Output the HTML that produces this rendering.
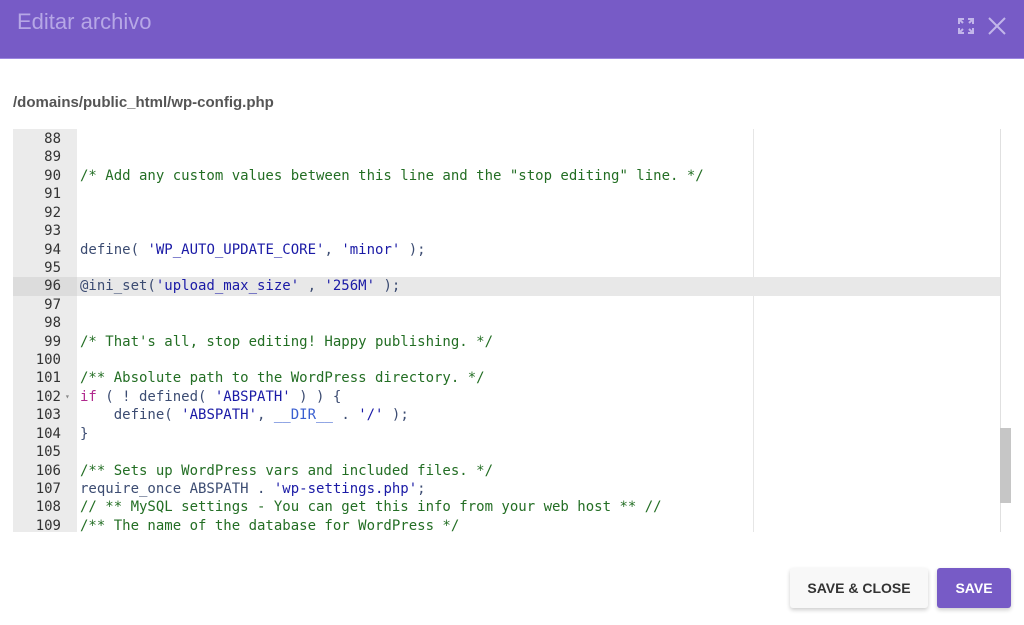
<!DOCTYPE html>
<html><head><meta charset="utf-8"><style>
body{margin:0;width:1024px;height:625px;background:#fff;font-family:"Liberation Sans",sans-serif;overflow:hidden;position:relative}
.hdr{position:absolute;left:0;top:0;width:1024px;height:58px;background:#775bc6;border-bottom:1px solid #9c86e0}
.title{position:absolute;left:17px;top:9px;font-size:22px;color:#b6a7e6}
.path{position:absolute;left:13px;top:94px;font-size:15px;font-weight:bold;color:#555}
.ed{position:absolute;left:13px;top:129px;width:998px;height:403px;background:#fff;overflow:hidden}
.gut{position:absolute;left:0;top:0;width:64px;height:403px;background:#ebebeb}
.lines{position:absolute;left:0;top:1px;width:987px;font-family:"DejaVu Sans Mono",monospace;font-size:14px;line-height:18.43px}
.ln{display:block;position:relative;height:18.43px}
.n{position:absolute;left:0;width:48px;text-align:right;color:#333}
.c{position:absolute;left:67px;color:#3c4c72;white-space:pre}
.hl{background:#e8e8e8;width:987px}
.hl .n{background:#dcdcdc;width:64px;padding-right:16px;box-sizing:border-box}
.cm{color:#236e24}.s{color:#1a1aa6}.k{color:#b0288d}.d{color:#3a5fd0}
.margin{position:absolute;left:740px;top:0;width:1px;height:403px;background:#e6e6e6}
.sb{position:absolute;left:987px;top:0;width:11px;height:403px;background:#fff;border-left:1px solid #e0e0e0}
.th{position:absolute;left:987px;top:299px;width:11px;height:75px;background:#c6c6c6}
.btn{position:absolute;top:568px;height:40px;border-radius:3px;font-size:14px;font-weight:bold;display:flex;align-items:center;justify-content:center;box-shadow:0 2px 4px rgba(0,0,0,.2)}
</style></head><body>
<div class="hdr"><div class="title">Editar archivo</div>
<svg style="position:absolute;left:957px;top:17px" width="18" height="18" viewBox="0 0 18 18" fill="none" stroke="#c2b6ea" stroke-width="2"><path d="M2 7V2h5M2 2l4 4M16 7V2h-5M16 2l-4 4M2 11v5h5M2 16l4-4M16 11v5h-5M16 16l-4-4"/></svg>
<svg style="position:absolute;left:988px;top:17px" width="18" height="18" viewBox="0 0 18 18" stroke="#c2b6ea" stroke-width="2"><path d="M1 1L17 17M17 1L1 17"/></svg>
</div>
<div class="path">/domains/public_html/wp-config.php</div>
<div class="ed"><div class="gut"></div><div class="margin"></div>
<div class="lines"><span class="ln"><span class="n">88</span></span><span class="ln"><span class="n">89</span></span><span class="ln"><span class="n">90</span><span class="c cm">/* Add any custom values between this line and the "stop editing" line. */</span></span><span class="ln"><span class="n">91</span></span><span class="ln"><span class="n">92</span></span><span class="ln"><span class="n">93</span></span><span class="ln"><span class="n">94</span><span class="c">define( <span class="s">'WP_AUTO_UPDATE_CORE'</span>, <span class="s">'minor'</span> );</span></span><span class="ln"><span class="n">95</span></span><span class="ln hl"><span class="n">96</span><span class="c">@ini_set(<span class="s">'upload_max_size'</span> , <span class="s">'256M'</span> );</span></span><span class="ln"><span class="n">97</span></span><span class="ln"><span class="n">98</span></span><span class="ln"><span class="n">99</span><span class="c cm">/* That's all, stop editing! Happy publishing. */</span></span><span class="ln"><span class="n">100</span></span><span class="ln"><span class="n">101</span><span class="c cm">/** Absolute path to the WordPress directory. */</span></span><span class="ln"><span class="n">102</span><span style="position:absolute;left:52px;top:0;font-size:8px;color:#888">▾</span><span class="c"><span class="k">if</span> ( ! defined( <span class="s">'ABSPATH'</span> ) ) {</span></span><span class="ln"><span class="n">103</span><span class="c">    define( <span class="s">'ABSPATH'</span>, <span class="d">__DIR__</span> . <span class="s">'/'</span> );</span></span><span class="ln"><span class="n">104</span><span class="c">}</span></span><span class="ln"><span class="n">105</span></span><span class="ln"><span class="n">106</span><span class="c cm">/** Sets up WordPress vars and included files. */</span></span><span class="ln"><span class="n">107</span><span class="c">require_once ABSPATH . <span class="s">'wp-settings.php'</span>;</span></span><span class="ln"><span class="n">108</span><span class="c cm">// ** MySQL settings - You can get this info from your web host ** //</span></span><span class="ln"><span class="n">109</span><span class="c cm">/** The name of the database for WordPress */</span></span></div>
<div class="sb"></div><div class="th"></div>
</div>
<div class="btn" style="left:790px;width:138px;background:#f8f8f8;color:#333">SAVE &amp; CLOSE</div>
<div class="btn" style="left:937px;width:74px;background:#775bc6;color:#fff">SAVE</div>
</body></html>
